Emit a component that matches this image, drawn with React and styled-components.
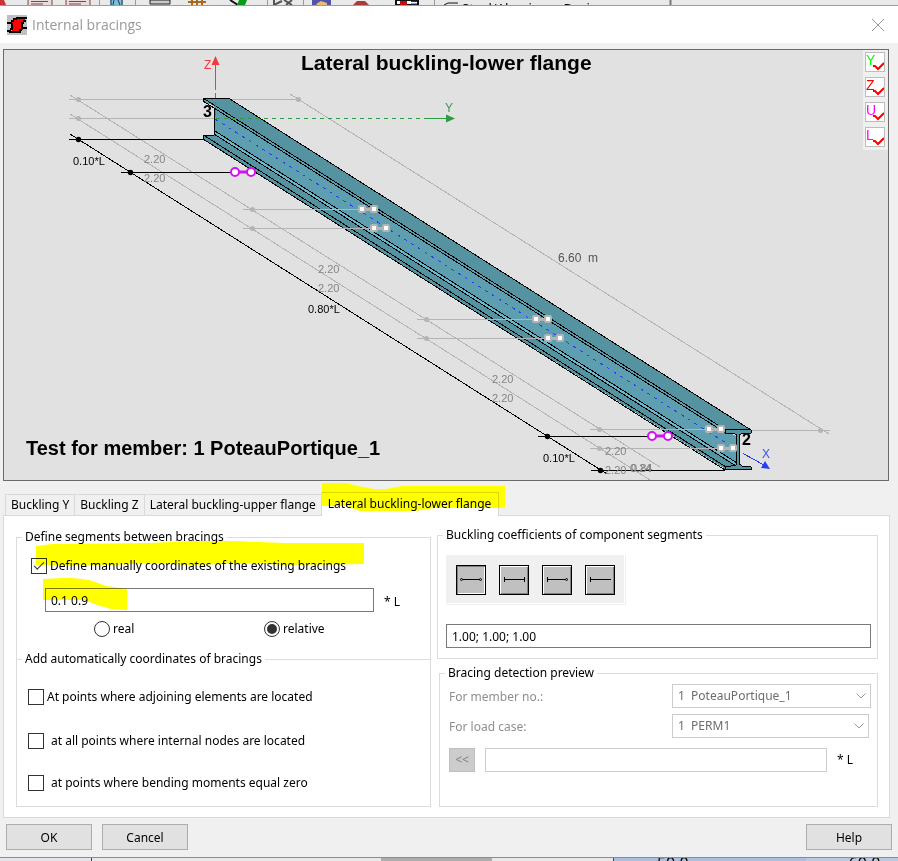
import React, { useState } from 'react';
import styled, { createGlobalStyle, css } from 'styled-components';

const Global = createGlobalStyle`
  *, *::before, *::after { box-sizing: border-box; }
  body {
    margin: 0;
    background: #e8e8ea;
    color: #000;
    font: 12px/16px "Noto Sans", Tahoma, sans-serif;
  }
  button, input, select { font: inherit; color: inherit; }
`;

const Screen = styled.div`
  display: flex;
  flex-direction: column;
`;

const HostToolbar = styled.div`
  height: 5px;
  overflow: hidden;
  background: #e9e9e9;
  svg { display: block; }
`;

const HostStatus = styled.div`
  display: flex;
  height: 3px;
  overflow: hidden;
  background: #e6e6e8;
  font-size: 16px;
  line-height: 10px;
`;

const StatusCell = styled.div`
  flex: ${(p) => p.$grow} 0 0;
  min-width: 0;
  background: ${(p) => p.$tone};
  border-right: 1px solid ${(p) => p.$edge || p.$tone};
  text-indent: ${(p) => p.$inset || 0}px;
`;

const Dialog = styled.main`
  background: #f0f0f0;
  border-top: 1px solid #9d9d9d;
  border-bottom: 1px solid #8c8c8c;
`;

const TitleBar = styled.header`
  display: flex;
  align-items: center;
  gap: 5px;
  height: 37px;
  padding: 0 12px 0 7px;
  background: #fff;
  h1 {
    flex: 1;
    margin: 0;
    font: 14px/20px "Open Sans", "Segoe UI", sans-serif;
    color: #999;
  }
`;

const CloseButton = styled.button`
  display: grid;
  place-items: center;
  width: 16px;
  height: 16px;
  padding: 0;
  border: 0;
  background: none;
`;

const Viewport = styled.section`
  display: flex;
  align-items: flex-start;
  margin: 6px 9px 0 3px;
  border: 1px solid #6a6a6a;
  background: #e1e1e1;
`;

const Drawing = styled.svg`
  display: block;
  flex: 1;
  min-width: 0;
  height: 430px;
  font-family: "Liberation Sans", Arial, sans-serif;
`;

const ViewTools = styled.div`
  display: flex;
  flex-direction: column;
  gap: 5px;
  width: 25px;
  padding: 2px 2px 3px;
  background: #f0f0f0;
`;

const ViewToggle = styled.button`
  width: 20px;
  height: 20px;
  padding: 0;
  border: 1px solid #bdbdbd;
  background: #fff;
  svg { display: block; }
`;

const TabList = styled.div`
  display: flex;
  align-items: flex-end;
  position: relative;
  z-index: 1;
  height: 24px;
  margin: 11px 8px -1px 5px;
`;

const Tab = styled.button`
  position: relative;
  height: 22px;
  padding: 0 5px;
  border: 1px solid #d9d9d9;
  border-left-width: ${(p) => (p.$first ? 1 : 0)}px;
  background: #f0f0f0;
  white-space: nowrap;
  ${(p) =>
    p.$active &&
    css`
      height: 24px;
      padding: 0 7px 2px 6px;
      border-left-width: 1px;
      border-bottom: 0;
      margin-left: -1px;
      background: #fff;
    `}
`;

const Highlight = styled.svg`
  position: absolute;
  left: ${(p) => p.$left}px;
  top: ${(p) => p.$top}px;
  fill: #ff0;
  mix-blend-mode: multiply;
  pointer-events: none;
`;

const TabPage = styled.div`
  display: grid;
  grid-template-columns: 415fr 441fr;
  gap: 6px;
  margin: 0 8px 0 3px;
  padding: 11px 11px 10px 12px;
  border: 1px solid #d9d9d9;
  background: #fff;
`;

const Column = styled.div`
  display: flex;
  flex-direction: column;
  min-width: 0;
  padding-top: ${(p) => p.$drop || 0}px;
`;

const Group = styled.fieldset`
  min-width: 0;
  margin: 0 0 ${(p) => p.$after || 0}px ${(p) => p.$indent || 0}px;
  padding: 0 6px ${(p) => p.$bottom}px 5px;
  border: 1px solid #dcdcdc;
  border-bottom-width: ${(p) => (p.$open ? 0 : 1)}px;
  legend {
    padding: 0 3px;
    line-height: 16px;
  }
`;

const Line = styled.div`
  display: flex;
  align-items: center;
  position: relative;
  gap: ${(p) => p.$gap || 0}px;
  margin-top: ${(p) => p.$above || 0}px;
  margin-left: ${(p) => p.$indent || 0}px;
`;

const Check = styled.label`
  display: flex;
  align-items: center;
  gap: ${(p) => p.$gap}px;
  height: 16px;
  input {
    appearance: none;
    display: grid;
    place-items: center;
    flex: none;
    width: 16px;
    height: 16px;
    margin: 0;
    border: 1px solid #333;
    background: #fff;
  }
  input[type='radio'] { border-radius: 50%; }
  input[type='radio']:checked::before {
    content: '';
    width: 10px;
    height: 10px;
    border-radius: 50%;
    background: #333;
  }
  input[type='checkbox']:checked::before {
    content: '';
    width: 10px;
    height: 5px;
    margin-bottom: 3px;
    border: solid #333;
    border-width: 0 0 1px 1px;
    transform: rotate(-45deg);
  }
`;

const RadioRow = styled.div`
  display: grid;
  grid-template-columns: 170px auto;
  margin: 9px 0 0 72px;
`;

const TextBox = styled.input`
  flex: 1;
  min-width: 0;
  width: 100%;
  height: 24px;
  padding: 0 5px;
  border: 1px solid ${(p) => (p.disabled ? '#ccc' : '#7a7a7a')};
  border-radius: 0;
  background: #fff;
`;

const Unit = styled.span`
  flex: none;
  width: ${(p) => p.$width}px;
  padding-top: ${(p) => p.$drop || 0}px;
  white-space: pre;
`;

const SchemeBar = styled.div`
  display: flex;
  gap: 13px;
  width: 180px;
  margin: 12px 0 19px 3px;
  padding: 10px 0 9px 10px;
  border: solid #f0f0f0;
  border-width: 0 1px 1px 0;
  background: #f0f0f0;
  box-shadow: inset -1px -1px #fff;
`;

const SchemeButton = styled.button`
  width: 30px;
  height: 30px;
  padding: 0;
  border: 1px solid #000;
  background: #c0c0c0;
  box-shadow: ${(p) =>
    p.$pressed
      ? 'inset 1px 1px #808080, inset -1px -1px #fff'
      : 'inset 1px 1px #fff, inset -1px -1px #808080'};
  svg { display: block; }
`;

const FieldRow = styled.div`
  display: grid;
  grid-template-columns: 223px 1fr;
  align-items: center;
  margin: ${(p) => p.$above}px ${(p) => p.$end}px 0 4px;
  color: #8f8f8f;
  label { padding-top: 2px; }
`;

const Picker = styled.div`
  display: grid;
  align-items: center;
  select, svg { grid-area: 1 / 1; }
  select {
    appearance: none;
    width: 100%;
    height: 24px;
    padding: 0 20px 0 5px;
    border: 1px solid #ccc;
    border-radius: 0;
    background: #fff;
    color: #6d6d6d;
    opacity: 1;
  }
  svg { justify-self: end; margin-right: 5px; pointer-events: none; }
`;

const PushButton = styled.button`
  width: ${(p) => (p.$small ? 26 : 86)}px;
  height: ${(p) => (p.$small ? 24 : 26)}px;
  padding: 0;
  border: 1px solid ${(p) => (p.disabled ? '#bfbfbf' : '#adadad')};
  background: ${(p) => (p.disabled ? '#ccc' : '#e1e1e1')};
  color: ${(p) => (p.disabled ? '#838383' : '#000')};
`;

const Footer = styled.footer`
  display: flex;
  gap: 10px;
  padding: 6px 6px 7px;
  button { padding-top: 1px; }
  button:last-child { margin-left: auto; }
`;

const HostIcons = () => (
  <svg width="898" height="5" aria-hidden="true" fontFamily="Noto Sans, sans-serif" fontSize="13">
    <path d="M0 0h4l2 5H0z" fill="#c33" />
    {[28, 66].map((x) => (
      <g key={x}>
        <path d={`M${x} 0h24v5h-24z`} fill="#e9dcdc" />
        <path d={`M${x} 0v5M${x + 24} 0v5M${x + 3} 1.500h17M${x + 3} 4h12`} stroke="#8b3e3e" />
      </g>
    ))}
    <path d="M99.500 0v5M135.500 0v5M267.500 0v5M303.500 0v5M434.500 0v5" stroke="#9a9a9a" />
    <path d="M110 0h13v5h-13z" fill="#79bfdc" />
    <path d="M111 0v5M122 0v5M114 0l-1 5M118 0l2 5" stroke="#333" />
    <path d="M150 0h20v4h-20z" fill="#c9c9c9" stroke="#222" />
    <path d="M188 2h18M192 0v5M202 0v5M197 0v5" stroke="#a86a18" strokeWidth="2" />
    <path d="M230 0l8 5" stroke="#111" strokeWidth="2" />
    <path d="M239 0h8l-2 5h-8z" fill="#089b16" />
    <path d="M274 0v5l8-4M284 0l8 5M292 0l-6 5" fill="none" stroke="#555" strokeWidth="2" />
    <path d="M312 0h19v5h-19z" fill="#5254a9" />
    <path d="M316 4l5-3 6 2v2h-10z" fill="#e8bd70" />
    <path d="M353 5l4-4h8l4 4z" fill="#a83b3b" />
    <path d="M396 0h22v5h-22z" fill="#fff" stroke="#111" strokeWidth="2" />
    <path d="M400 1h7v4h-7z" fill="#b11" />
    <path d="M411 1.500h6M411 4h6" stroke="#22a" />
    <path d="M444 5l4-2h10" stroke="#111" fill="none" />
    <text x="462" y="13">Steel/Aluminum Design</text>
    <path d="M670.500 0v5" stroke="#777" strokeWidth="2" />
  </svg>
);

const BeamIcon = () => (
  <svg width="20" height="20" viewBox="0 0 20 20" aria-hidden="true" shapeRendering="crispEdges">
    <path d="M0 0h20v20H0z" fill="#c0c0c0" />
    <path d="M6 4h12l-3 3v5l2 2-5 3H3l3-3V8L3 7z" fill="#f00" />
    <path d="M0 8h5M4 6h3M6 4h4M9 3h11M16 6h3M14 8h3M5 8v6M15 8v4M14 13h6M12 15h3M3 14h3M0 16h4M2 17h12" stroke="#000" strokeWidth="2" fill="none" />
  </svg>
);

const slope = (x1, y1, x2, y2) => `M${x1} ${y1}L${x2} ${y2}`;

const greyLines = [
  slope(70, 95, 660, 467),
  slope(70, 114, 650, 480),
  slope(290, 94, 829, 434),
  'M69 99.500H203M230 99.500H300M69 118.500H215M751 430.500H830',
].join('');

const greyLeaders = 'M243 209.500H362M243 228.500H374M417 319.500H536M417 338.500H548M590 429.500H709M590 448.500H721';
const greyDots = [[78, 99], [78, 118], [252, 209], [252, 228], [426, 319], [426, 338], [599, 429], [599, 448], [298, 99], [820, 430]];
const blackDots = [[78, 139], [130, 172], [547, 436], [600, 470]];
const nodePairs = [[362, 374, 209], [374, 386, 228], [536, 548, 319], [548, 560, 338], [709, 721, 429], [721, 733, 448]];
const braces = [[235, 251, 172], [652, 668, 436]];
const spans = [[144, 163], [144, 182], [318, 273], [318, 292], [492, 383], [492, 402], [605, 455], [605, 474]];

const BeamDrawing = () => (
  <Drawing viewBox="4 50 859 430" role="img" aria-label="Lateral buckling-lower flange">
    <g shapeRendering="crispEdges">
      <path d={greyLines} stroke="#b4b4b4" fill="none" />
      <g stroke="#000" strokeLinejoin="round">
        <path d="M229 98L751 430H725L203 98z" fill="#5593a0" stroke="none" />
        <path d="M203 98L725 430L736 436V466L214 135V106L203 101z" fill="#5d9eb0" stroke="none" />
        <path d="M203 135H214L736 466L725 469L203 139z" fill="#5593a0" stroke="none" />
        <path d="M214 132.500L736 464" stroke="#69b8cc" strokeWidth="2" />
        <path
          d="M203 98.500H229L751 430M203 98L725 429.500M203 98V101L725 432.500M214.500 108V135M203 135.500H214M215 131L737 463M214 134L736 466M205 136L726 467M203 139L725 470M203 135V139"
          fill="none"
        />
        <path d="M725 429.500H751V433H742L739.500 435V464L743 466.500H751V469.500H725V467L736.500 465V435L733 433H725z" fill="#5593a0" />
      </g>
      <path d="M215 119L737 450" stroke="#2a3cf0" strokeDasharray="3 5" />
      <path d="M743 453.500L764 465" stroke="#2a3cf0" />
      <path d="M215.500 63V90" stroke="#f23a3e" />
      <path d="M215.500 93V118" stroke="#f23a3e" strokeDasharray="5 4" />
      <path d="M216 118.500H427" stroke="#2f9a3f" strokeDasharray="4 4" />
      <path d="M427 118.500H447" stroke="#2f9a3f" />
      <path d={greyLeaders} stroke="#b4b4b4" />
      <path d="M70 134L607 474M69 139.500H203M121 172.500H232M538 436.500H650M591 470.500H725" stroke="#000" fill="none" />
    </g>
    <path d="M770 469l-9-1 4-7z" fill="#2a3cf0" />
    <path d="M215.500 56l4 9h-8z" fill="#f23a3e" />
    <path d="M455 118.500l-9-4v8z" fill="#2f9a3f" />
    {greyDots.map(([x, y]) => <circle key={`${x}-${y}`} cx={x + 0.5} cy={y + 0.5} r="2.500" fill="#b4b4b4" />)}
    {blackDots.map(([x, y]) => <circle key={`${x}-${y}`} cx={x + 0.5} cy={y + 0.5} r="2.700" />)}
    {nodePairs.map(([a, b, y]) => (
      <g key={`${a}-${y}`} fill="#fff" stroke="#b4b4b4" strokeWidth="2">
        <path d={`M${a} ${y + 0.5}H${b}`} strokeWidth="3" />
        <rect x={a - 3} y={y - 3} width="6" height="6" rx="1" />
        <rect x={b - 3} y={y - 3} width="6" height="6" rx="1" />
      </g>
    ))}
    {braces.map(([a, b, y]) => (
      <g key={a} fill="#fff" stroke="#cf14f2" strokeWidth="2">
        <path d={`M${a} ${y}H${b}`} strokeWidth="3" />
        <circle cx={a} cy={y} r="4" />
        <circle cx={b} cy={y} r="4" />
      </g>
    ))}
    <g fontSize="11" fill="#858585">
      {spans.map(([x, y]) => <text key={`${x}-${y}`} x={x} y={y}>2.20</text>)}
      <text x="630" y="472">0.24</text>
      <text x="631" y="472">0.84</text>
    </g>
    <g fontSize="11">
      <text x="73" y="165">0.10*L</text>
      <text x="308" y="313">0.80*L</text>
      <text x="543" y="462">0.10*L</text>
    </g>
    <text x="558" y="262" fontSize="12" fill="#555">6.60&#160; m</text>
    <g fontSize="12">
      <text x="204" y="69" fill="#f23a3e">Z</text>
      <text x="445" y="112" fill="#3a9a5a">Y</text>
      <text x="762" y="458" fill="#3f51e8">X</text>
    </g>
    <g fontWeight="700">
      <text x="203" y="117" fontSize="16">3</text>
      <text x="742" y="445" fontSize="16">2</text>
      <text x="301" y="70" fontSize="21">Lateral buckling-lower flange</text>
      <text x="26" y="455" fontSize="20">Test for member: 1 PoteauPortique_1</text>
    </g>
  </Drawing>
);

const planes = [['Y', '#0f0'], ['Z', '#f00'], ['U', '#f0f'], ['L', '#f0f']];

const schemes = [
  { name: 'Pinned-pinned', shape: <path d="M5 13.500H23" />, ends: [4.5, 23.5] },
  { name: 'Fixed-fixed', shape: <path d="M4 13.500H24M4.500 11v5M24.500 11v5" />, ends: [] },
  { name: 'Fixed-pinned', shape: <path d="M4 13.500H23M4.500 11v5" />, ends: [23.5] },
  { name: 'Fixed-free', shape: <path d="M4 13.500H25M4.500 11v5" />, ends: [] },
];

const Combo = ({ id, value }) => (
  <Picker>
    <select id={id} disabled defaultValue={value}>
      <option>{value}</option>
    </select>
    <svg width="10" height="6" viewBox="0 0 10 6" fill="none" stroke="#999" aria-hidden="true">
      <path d="M0.500 0.500L5 5L9.500 0.500" />
    </svg>
  </Picker>
);

const tabs = ['Buckling Y', 'Buckling Z', 'Lateral buckling-upper flange', 'Lateral buckling-lower flange'];

export default function App() {
  const [scheme, setScheme] = useState(0);
  return (
    <Screen>
      <Global />
      <HostToolbar><HostIcons /></HostToolbar>
      <Dialog>
        <TitleBar>
          <BeamIcon />
          <h1>Internal bracings</h1>
          <CloseButton aria-label="Close">
            <svg width="12" height="12" viewBox="0 0 12 12" stroke="#999"><path d="M0 0L12 12M12 0L0 12" /></svg>
          </CloseButton>
        </TitleBar>

        <Viewport>
          <BeamDrawing />
          <ViewTools>
            {planes.map(([letter, color]) => (
              <ViewToggle key={letter} aria-label={`Show ${letter}`}>
                <svg width="18" height="18" viewBox="0 0 18 18" fontFamily="Liberation Sans, sans-serif" fontSize="14">
                  <text x="0" y="12" fill={color}>{letter}</text>
                  <path d="M7 13h2l3 3 6-6" stroke="#f00" strokeWidth="2" fill="none" />
                </svg>
              </ViewToggle>
            ))}
          </ViewTools>
        </Viewport>

        <TabList role="tablist">
          {tabs.map((name, i) => (
            <Tab key={name} role="tab" aria-selected={i === 3} $first={i === 0} $active={i === 3}>
              {name}
              {i === 3 && (
                <Highlight $left={0} $top={-10} width="183" height="28" viewBox="0 0 183 28">
                  <path d="M0 0h24l12 3 16 3h12l16-3h103v22h-70l-20 3H38l-14-5H0z" />
                </Highlight>
              )}
            </Tab>
          ))}
        </TabList>

        <TabPage role="tabpanel">
          <Column $drop={2}>
            <Group $open $after={-8} $bottom={22}>
              <legend>Define segments between bracings</legend>
              <Line $above={13} $indent={9}>
                <Check $gap={3}>
                  <input type="checkbox" defaultChecked />
                  Define manually coordinates of the existing bracings
                </Check>
                <Highlight $left={5} $top={-17} width="328" height="26" viewBox="0 0 328 26">
                  <path d="M0 5l16-2 98-1 40-2h44l50 2h80v21l-80 1-28-2-66 2-38-2-40 2H0z" />
                </Highlight>
              </Line>
              <Line $above={14} $indent={23} $gap={10}>
                <TextBox aria-label="Coordinates of bracings" defaultValue="0.1 0.9" />
                <Unit $width={40} $drop={4}>{'* L'}</Unit>
                <Highlight $left={-2} $top={-10} width="84" height="33" viewBox="0 0 84 33">
                  <path d="M0 1l20-1h10l16 2 18 6 20 3v21l-16-1-14-4-12-5H0z" />
                </Highlight>
              </Line>
              <RadioRow>
                <Check $gap={3}><input type="radio" name="mode" />real</Check>
                <Check $gap={3}><input type="radio" name="mode" defaultChecked />relative</Check>
              </RadioRow>
            </Group>
            <Group $bottom={15}>
              <legend>Add automatically coordinates of bracings</legend>
              <Line $above={22} $indent={6}>
                <Check $gap={3}><input type="checkbox" />At points where adjoining elements are located</Check>
              </Line>
              <Line $above={28} $indent={6}>
                <Check $gap={7}><input type="checkbox" />at all points where internal nodes are located</Check>
              </Line>
              <Line $above={26} $indent={6}>
                <Check $gap={7}><input type="checkbox" />at points where bending moments equal zero</Check>
              </Line>
            </Group>
          </Column>

          <Column>
            <Group $bottom={10} $after={6}>
              <legend>Buckling coefficients of component segments</legend>
              <SchemeBar>
                {schemes.map(({ name, shape, ends }, i) => (
                  <SchemeButton key={name} aria-label={name} $pressed={i === scheme} onClick={() => setScheme(i)}>
                    <svg width="28" height="28" viewBox="0 0 28 28" stroke="#000" fill="none">
                      {shape}
                      {ends.map((x) => <circle key={x} cx={x} cy="13.500" r="1" fill="#c0c0c0" />)}
                    </svg>
                  </SchemeButton>
                ))}
              </SchemeBar>
              <Line $indent={3}>
                <TextBox aria-label="Buckling coefficients" defaultValue="1.00; 1.00; 1.00" />
              </Line>
            </Group>
            <Group $indent={2} $bottom={34}>
              <legend>Bracing detection preview</legend>
              <FieldRow $above={3} $end={0}>
                <label htmlFor="member">For member no.:</label>
                <Combo id="member" value={'1\u00a0 PoteauPortique_1'} />
              </FieldRow>
              <FieldRow $above={6} $end={2}>
                <label htmlFor="loadcase">For load case:</label>
                <Combo id="loadcase" value={'1\u00a0 PERM1'} />
              </FieldRow>
              <Line $above={10} $indent={4} $gap={10}>
                <PushButton $small disabled>&lt;&lt;</PushButton>
                <TextBox disabled aria-label="Detected bracings" />
                <Unit $width={34}>{'* L'}</Unit>
              </Line>
            </Group>
          </Column>
        </TabPage>

        <Footer>
          <PushButton>OK</PushButton>
          <PushButton>Cancel</PushButton>
          <PushButton>Help</PushButton>
        </Footer>
      </Dialog>
      <HostStatus aria-hidden="true">
        <StatusCell $grow={92} $tone="#e4e4ea" $edge="#444" />
        <StatusCell $grow={290} $tone="#e8e8e8" />
        <StatusCell $grow={110} $tone="#acacac" />
        <StatusCell $grow={122} $tone="#e8e8e8" $edge="#445" />
        <StatusCell $grow={192} $tone="#abbfe0" $inset={43}>50.0</StatusCell>
        <StatusCell $grow={92} $tone="#b9c9e4" $inset={43}>60.0</StatusCell>
      </HostStatus>
    </Screen>
  );
}
